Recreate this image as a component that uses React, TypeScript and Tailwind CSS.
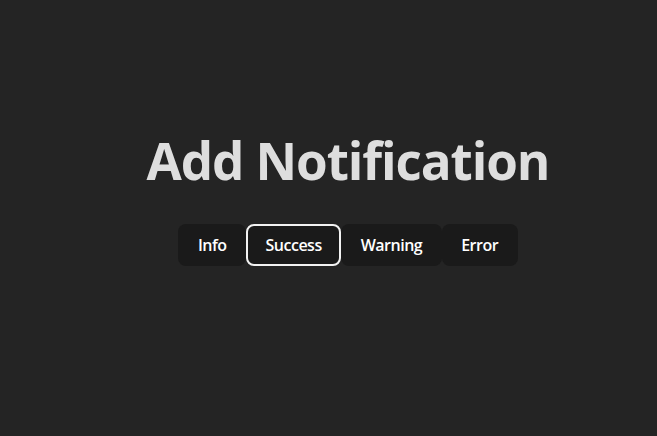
export default function App() {
  const types = ["Info", "Success", "Warning", "Error"]
  const active = "Success"
  return (
    <div className="h-screen w-full bg-[#242424] flex flex-col items-center justify-center pl-[39px] pb-[38px] font-['Open_Sans',sans-serif] text-[#dedede]">
      <h1 className="text-[51.2px] leading-[1.1] font-bold tracking-[-1.1px] m-0">Add Notification</h1>
      <div className="flex mt-[35px]">
        {types.map((t) => (
          <button
            key={t}
            className={`h-[42px] px-[17.5px] rounded-[8px] bg-[#1a1a1a] text-[16px] font-semibold tracking-[-0.5px] text-white border-2 ${
              t === active ? "border-[#f2f2f2]" : "border-transparent"
            }`}
          >
            {t}
          </button>
        ))}
      </div>
    </div>
  )
}
